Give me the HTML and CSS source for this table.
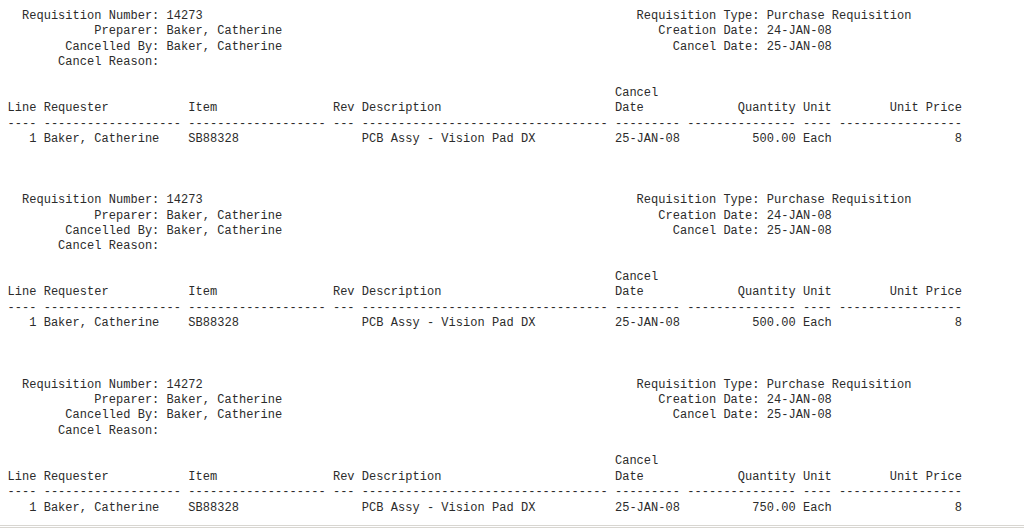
FILE: index.html
```html
<!DOCTYPE html>
<html>
<head>
<meta charset="utf-8">
<link rel="stylesheet" href="styles.css">
<title>Cancelled Requisitions</title>
</head>
<body>
<div class="page">
<pre class="report">  Requisition Number: 14273                                                            Requisition Type: Purchase Requisition
            Preparer: Baker, Catherine                                                    Creation Date: 24-JAN-08
        Cancelled By: Baker, Catherine                                                      Cancel Date: 25-JAN-08
       Cancel Reason:

                                                                                    Cancel
Line Requester           Item                Rev Description                        Date             Quantity Unit        Unit Price
---- ------------------- ------------------- --- ---------------------------------- --------- --------------- ---- -----------------
   1 Baker, Catherine    SB88328                 PCB Assy - Vision Pad DX           25-JAN-08          500.00 Each                 8



  Requisition Number: 14273                                                            Requisition Type: Purchase Requisition
            Preparer: Baker, Catherine                                                    Creation Date: 24-JAN-08
        Cancelled By: Baker, Catherine                                                      Cancel Date: 25-JAN-08
       Cancel Reason:

                                                                                    Cancel
Line Requester           Item                Rev Description                        Date             Quantity Unit        Unit Price
---- ------------------- ------------------- --- ---------------------------------- --------- --------------- ---- -----------------
   1 Baker, Catherine    SB88328                 PCB Assy - Vision Pad DX           25-JAN-08          500.00 Each                 8



  Requisition Number: 14272                                                            Requisition Type: Purchase Requisition
            Preparer: Baker, Catherine                                                    Creation Date: 24-JAN-08
        Cancelled By: Baker, Catherine                                                      Cancel Date: 25-JAN-08
       Cancel Reason:

                                                                                    Cancel
Line Requester           Item                Rev Description                        Date             Quantity Unit        Unit Price
---- ------------------- ------------------- --- ---------------------------------- --------- --------------- ---- -----------------
   1 Baker, Catherine    SB88328                 PCB Assy - Vision Pad DX           25-JAN-08          750.00 Each                 8
</pre>
</div>
<div class="frame-edge"></div>
</body>
</html>
```
FILE: styles.css
```css
html, body {
  margin: 0;
  padding: 0;
  background: #ffffff;
  overflow: hidden;
}

.page {
  height: 525px;
  overflow: hidden;
  box-sizing: border-box;
  padding: 9px 0 0 7.5px;
}

.report {
  margin: 0;
  font-family: "Liberation Mono", "Courier New", monospace;
  font-size: 12px;
  line-height: 15.36px;
  letter-spacing: 0.03px;
  color: #2b2b2b;
  white-space: pre;
}

.frame-edge {
  height: 1px;
  border-top: 1px solid #d8d6d1;
  border-bottom: 1px solid #d8d6d1;
}
```
